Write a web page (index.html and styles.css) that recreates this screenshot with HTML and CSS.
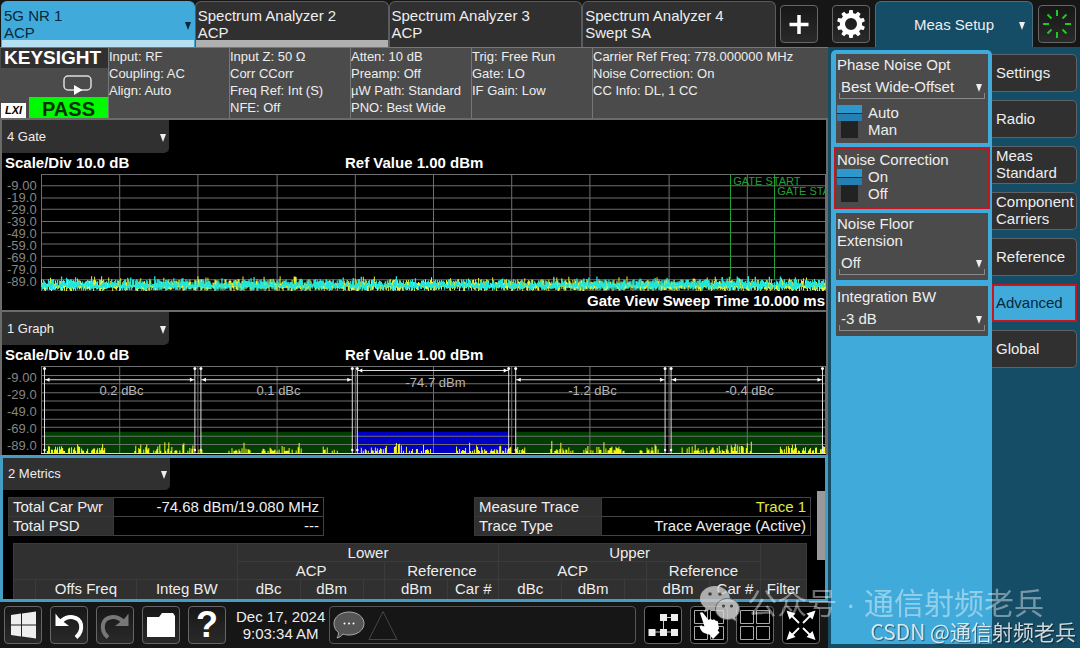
FILE: index.html
```html
<!DOCTYPE html>
<html lang="en">
<head>
    <meta charset="UTF-8">
    <title>Signal Analyzer</title>
    <link rel="stylesheet" href="styles.css">
</head>
<body>
    <main class="workspace">
        <div class="topbar">
            <nav class="tabs">
                <button class="tab active live">5G NR 1<br>ACP</button>
                <button class="tab live">Spectrum Analyzer 2<br>ACP</button>
                <button class="tab">Spectrum Analyzer 3<br>ACP</button>
                <button class="tab">Spectrum Analyzer 4<br>Swept SA</button>
            </nav>
            <button class="icon-btn add-btn" aria-label="Add screen">
                <svg width="36" height="36" viewBox="0 0 36 36"><path d="M18 9v19M8.500 18.500h19" stroke="#fff" stroke-width="3.500"/></svg>
            </button>
        </div>

        <section class="status">
            <div class="brand">
                <div class="brand-name">KEYSIGHT</div>
                <div class="sweep">
                    <svg width="30" height="22" viewBox="0 0 30 22"><rect x="1" y="1" width="27" height="14" rx="4" fill="none" stroke="#ddd" stroke-width="1.500"/><path d="M11 10l8.500 5-8.500 5z" fill="#fff"/></svg>
                </div>
                <div class="result">
                    <span class="lxi">LXI</span>
                    <span class="pass">PASS</span>
                </div>
            </div>
            <div class="cell">Input: RF<br>Coupling: AC<br>Align: Auto</div>
            <div class="cell">Input Z: 50 Ω<br>Corr CCorr<br>Freq Ref: Int (S)<br>NFE: Off</div>
            <div class="cell">Atten: 10 dB<br>Preamp: Off<br>µW Path: Standard<br>PNO: Best Wide</div>
            <div class="cell">Trig: Free Run<br>Gate: LO<br>IF Gain: Low</div>
            <div class="cell">Carrier Ref Freq: 778.000000 MHz<br>Noise Correction: On<br>CC Info: DL, 1 CC</div>
        </section>

        <section class="panel gate">
            <div class="view-select">
                <select aria-label="Window 4 view"><option>4 Gate</option></select>
            </div>
            <div class="scale"><span>Scale/Div 10.0 dB</span><span>Ref Value 1.00 dBm</span></div>
            <div class="chart">
                <div class="axis gate-axis">
                    <span>-9.00</span><span>-19.0</span><span>-29.0</span><span>-39.0</span><span>-49.0</span><span>-59.0</span><span>-69.0</span><span>-79.0</span><span>-89.0</span>
                </div>
                <div class="plot">
                    <svg id="gate-plot" viewBox="0 0 783 115" preserveAspectRatio="none"></svg>
                    <span class="marker marker-1">GATE START</span>
                    <span class="marker marker-2">GATE START</span>
                </div>
            </div>
            <div class="sweep-time">Gate View Sweep Time 10.000 ms</div>
        </section>

        <section class="panel graph">
            <div class="view-select">
                <select aria-label="Window 1 view"><option>1 Graph</option></select>
            </div>
            <div class="scale"><span>Scale/Div 10.0 dB</span><span>Ref Value 1.00 dBm</span></div>
            <div class="chart">
                <div class="axis graph-axis">
                    <span>-9.00</span><span>-29.0</span><span>-49.0</span><span>-69.0</span><span>-89.0</span>
                </div>
                <div class="plot">
                    <svg id="acp-plot" viewBox="0 0 783 87" preserveAspectRatio="none"></svg>
                    <div class="readings">
                        <span>0.2 dBc</span><span>0.1 dBc</span><span class="carrier">-74.7 dBm</span><span>-1.2 dBc</span><span>-0.4 dBc</span>
                    </div>
                </div>
            </div>
        </section>

        <section class="panel metrics">
            <div class="view-select">
                <select aria-label="Window 2 view"><option>2 Metrics</option></select>
            </div>
            <div class="summary">
                <table class="totals">
                    <tr><th>Total Car Pwr</th><td>-74.68 dBm/19.080 MHz</td></tr>
                    <tr><th>Total PSD</th><td>---</td></tr>
                </table>
                <table class="traces">
                    <tr><th>Measure Trace</th><td class="trace-1">Trace 1</td></tr>
                    <tr><th>Trace Type</th><td>Trace Average (Active)</td></tr>
                </table>
            </div>
            <table class="offsets">
                <colgroup>
                    <col class="w-gap"><col class="w-wide"><col class="w-wide">
                    <col class="w-val"><col class="w-val"><col class="w-gap"><col class="w-val"><col class="w-car">
                    <col class="w-val"><col class="w-val"><col class="w-gap"><col class="w-val"><col class="w-car">
                    <col class="w-filter">
                </colgroup>
                <tr><th colspan="3" rowspan="2"></th><th colspan="5">Lower</th><th colspan="5">Upper</th><th rowspan="2"></th></tr>
                <tr><th colspan="3">ACP</th><th colspan="2">Reference</th><th colspan="3">ACP</th><th colspan="2">Reference</th></tr>
                <tr>
                    <th></th><th>Offs Freq</th><th>Integ BW</th>
                    <th>dBc</th><th>dBm</th><th></th><th>dBm</th><th>Car #</th>
                    <th>dBc</th><th>dBm</th><th></th><th>dBm</th><th>Car #</th>
                    <th>Filter</th>
                </tr>
            </table>
            <div class="scrollbar"></div>
        </section>

        <footer class="taskbar">
            <button class="icon-btn" aria-label="Windows">
                <svg width="36" height="36" viewBox="0 0 36 36" fill="#eee"><path d="M6 8l10-1.500v11H6zM17 6.400L31 4.500v13H17zM6 18.500h10v11L6 28zM17 18.500h14v13l-14-1.900z"/></svg>
            </button>
            <button class="icon-btn" aria-label="Undo">
                <svg width="36" height="36" viewBox="0 0 36 36"><path d="M10 14.500C17 7.500 28 9 30 17.500c1 5.500-1.500 10-5 13" fill="none" stroke="#fff" stroke-width="4"/><path d="M4.500 6.500l3 4 4 3.500 6.500 5H4.500z" fill="#fff"/></svg>
            </button>
            <button class="icon-btn" aria-label="Redo">
                <svg width="36" height="36" viewBox="0 0 36 36"><path d="M26 14.500C19 7.500 8 9 6 17.500c-1 5.500 1.500 10 5 13" fill="none" stroke="#777" stroke-width="4"/><path d="M31.500 6.500l-3 4-4 3.500-6.500 5h13.500z" fill="#777"/></svg>
            </button>
            <button class="icon-btn" aria-label="Files">
                <svg width="36" height="36" viewBox="0 0 36 36"><path d="M4 10h12l3-4h11l2 3v21H4z" fill="#fff"/></svg>
            </button>
            <button class="icon-btn help" aria-label="Help">?</button>
            <time class="clock">Dec 17, 2024<br>9:03:34 AM</time>
            <div class="messages">
                <svg width="68" height="36" viewBox="0 0 68 36">
                    <path d="M19 5c8.500 0 15 5 15 11.500S27.500 28 19 28c-2.500 0-4-.3-6-1-1.500 2-3.500 3.500-6 4 1-1.500 1.500-3.500 1.500-5.500C5.500 23.500 4 20 4 16.500 4 10 10.500 5 19 5z" fill="#555" stroke="#aaa"/>
                    <g fill="#fff"><circle cx="14.500" cy="16.500" r="1"/><circle cx="19" cy="16.500" r="1"/><circle cx="23.500" cy="16.500" r="1"/></g>
                    <path d="M53 4.500L67 32.500H39z" fill="none" stroke="#444"/>
                </svg>
            </div>
            <button class="icon-btn black" aria-label="Block diagram">
                <svg width="36" height="36" viewBox="0 0 36 36"><path d="M18.500 10.500h11M18.500 10.500v15M7 25h23" stroke="#ccc" fill="none"/><path d="M15 7h7v7h-7zM26 7h7v7h-7zM3.500 22h7v7h-7zM15 22h7v7h-7zM26 22h7v7h-7z" fill="#eee"/></svg>
            </button>
            <button class="icon-btn black" aria-label="Touch layout">
                <svg width="36" height="36" viewBox="0 0 36 36"><path d="M3.500 3.500h13v13h-13zM19.500 3.500h13v13h-13zM3.500 19.500h13v13h-13zM19.500 19.500h13v13h-13z" fill="none" stroke="#aaa"/><path d="M9 6c1-1.200 2.500-.8 3.500.5l5 6.500c1.500-1.500 3-1 3.500 0 1.500-1 3-.5 3.500.8 1.500-.5 2.800.3 2.500 2l1 6-4.500 5-4 1.200-5-1.500c-3.500-1-5.500-4-6-7.500 1.500-1.200 3-.5 4.500 1l.5-.5z" fill="#fff"/><path d="M19 28.500l7-6 2.500 3-6.500 6.500z" fill="#fff"/></svg>
            </button>
            <button class="icon-btn black" aria-label="Multiple windows">
                <svg width="36" height="36" viewBox="0 0 36 36"><path d="M3.500 3.500h13v13h-13zM19.500 3.500h13v13h-13zM3.500 19.500h13v13h-13zM19.500 19.500h13v13h-13z" fill="none" stroke="#aaa"/></svg>
            </button>
            <button class="icon-btn black" aria-label="Full screen">
                <svg width="36" height="36" viewBox="0 0 36 36"><path d="M6 6l10 10M30 6L20 16M6 31l10-10M30 31L20 21" stroke="#fff" stroke-width="1.800"/><path d="M3.500 3.500l9 3-6 6zM32.500 3.500l-9 3 6 6zM3.500 33l9-3-6-6zM32.500 33l-9-3 6-6z" fill="#fff"/></svg>
            </button>
        </footer>
    </main>

    <aside class="side">
        <div class="side-top">
            <button class="icon-btn" aria-label="System settings">
                <svg width="36" height="36" viewBox="0 0 36 36">
                    <g fill="#fff">
                        <path id="teeth" d="M15.500 9l.8-5h3.400l.8 5zM15.500 27l.8 5h3.400l.8-5z"/>
                        <use href="#teeth" transform="rotate(36 18 18)"/>
                        <use href="#teeth" transform="rotate(72 18 18)"/>
                        <use href="#teeth" transform="rotate(108 18 18)"/>
                        <use href="#teeth" transform="rotate(144 18 18)"/>
                    </g>
                    <circle cx="18" cy="18" r="8.500" fill="none" stroke="#fff" stroke-width="5"/>
                </svg>
            </button>
            <button class="menu-title">Meas Setup</button>
            <button class="icon-btn" aria-label="Sweep activity">
                <svg width="36" height="36" viewBox="0 0 36 36"><path d="M18 4v6M18 26v6M4 18h6M26 18h6M8.500 8.500l4 4M23.500 23.500l4 4M8.500 27.500l4-4M23.500 12.500l4-4" stroke="#1fc91f" stroke-width="2"/></svg>
            </button>
        </div>
        <div class="side-body">
            <form class="settings">
                <div class="setting">
                    <label for="phase-noise">Phase Noise Opt</label>
                    <div class="dropdown"><select id="phase-noise"><option>Best Wide-Offset</option></select></div>
                    <div class="switch">
                        <label><input type="radio" name="phase-mode" checked>Auto</label>
                        <label><input type="radio" name="phase-mode">Man</label>
                    </div>
                </div>
                <div class="setting marked">
                    <span>Noise Correction</span>
                    <div class="switch">
                        <label><input type="radio" name="noise-corr" checked>On</label>
                        <label><input type="radio" name="noise-corr">Off</label>
                    </div>
                </div>
                <div class="setting">
                    <label for="floor-ext">Noise Floor<br>Extension</label>
                    <div class="dropdown"><select id="floor-ext"><option>Off</option></select></div>
                </div>
                <div class="setting">
                    <label for="int-bw">Integration BW</label>
                    <div class="dropdown"><select id="int-bw"><option>-3 dB</option></select></div>
                </div>
            </form>
            <nav class="pages">
                <button>Settings</button>
                <button>Radio</button>
                <button>Meas<br>Standard</button>
                <button>Component<br>Carriers</button>
                <button>Reference</button>
                <button class="current">Advanced</button>
                <button>Global</button>
            </nav>
        </div>
    </aside>

    <div class="wechat-mark">
        <svg width="42" height="38" viewBox="0 0 42 38">
            <path d="M16 1C7.500 1 1 6.500 1 13.500c0 4 2 7 5.500 9.500L5 27.500l5.500-2.700c1.800.5 3.500.7 5.500.7 7-1 15-5.500 15-12S24 1 16 1z" fill="#ccc"/>
            <path d="M28.500 13.500C22 13.500 16.500 18 16.500 24s5.500 10.500 12 10.500c1.500 0 3-.2 4.500-.7l4.500 2.400-1.200-4c2.800-2 4.200-5 4.200-8.200 0-6-5.500-10.500-12-10.500z" fill="#ddd" stroke="#777"/>
            <g fill="#444"><circle cx="11" cy="9" r="1.800"/><circle cx="21" cy="9" r="1.800"/><circle cx="24.500" cy="21" r="1.500"/><circle cx="32.500" cy="21" r="1.500"/></g>
        </svg>
        <span>公众号 · 通信射频老兵</span>
    </div>
    <div class="csdn-mark">CSDN @通信射频老兵</div>

    <script src="script.js"></script>
</body>
</html>
```
FILE: styles.css
```css
* {
    box-sizing: border-box;
}

body {
    display: grid;
    grid-template-columns: minmax(0, 1fr) 252px;
    min-height: 100vh;
    margin: 0;
    background: #161616;
    color: #eee;
    font-family: "Liberation Sans", Arial, sans-serif;
    font-size: 15px;
    line-height: 17px;
}

button,
select {
    margin: 0;
    font: inherit;
    color: inherit;
}

svg {
    display: block;
}

/* left part */
.workspace {
    display: flex;
    flex-direction: column;
    min-width: 0;
}

.topbar {
    display: flex;
    align-items: center;
    height: 47px;
}

.tabs {
    display: flex;
    flex: 1;
    align-self: stretch;
    padding: 1px 0 0 1px;
}

.tab {
    flex: 1;
    position: relative;
    padding: 4px 2px 5px;
    border: 1px solid #5c5c5c;
    border-bottom: none;
    border-radius: 6px 6px 0 0;
    background: #303030;
    text-align: left;
}

.tab.active {
    background: #40abdb;
    color: #06283a;
    border-color: #40abdb;
}

.tab.live::before {
    content: "";
    position: absolute;
    left: 0;
    right: 0;
    bottom: 0;
    height: 7px;
    background: rgba(255, 255, 255, 0.62);
}

.tab.active::after,
.menu-title::after,
.view-select::after,
.dropdown::after {
    content: "";
    position: absolute;
    right: 3px;
    top: 50%;
    margin-top: -3px;
    border: 3px solid transparent;
    border-top: 8px solid currentColor;
    border-bottom: none;
    pointer-events: none;
}

.icon-btn {
    flex: none;
    width: 38px;
    height: 38px;
    padding: 0;
    border: 1px solid #666;
    border-radius: 4px;
    background: linear-gradient(#171717, #2a2a2a);
}

.icon-btn.black {
    background: #000;
}

.add-btn {
    margin: 0 10px 0 4px;
}

.status {
    display: grid;
    grid-template-columns: 108px repeat(4, 121fr) 236fr;
    height: 73px;
    border-top: 1px solid #777;
    border-bottom: 2px solid #6b6b6b;
    background: #4b4b4b;
    font-size: 13px;
}

.cell {
    border-left: 1px solid #777;
    white-space: nowrap;
}

.brand {
    display: flex;
    flex-direction: column;
    padding-left: 1px;
}

.brand-name {
    height: 20px;
    padding-left: 3px;
    background: #303030;
    color: #fff;
    font-size: 19px;
    font-weight: bold;
    line-height: 20px;
}

.sweep {
    display: flex;
    flex: 1;
    justify-content: flex-end;
    align-items: flex-end;
    padding-right: 15px;
}

.result {
    display: flex;
    align-items: flex-end;
    gap: 3px;
}

.lxi {
    width: 25px;
    height: 15px;
    background: #fff;
    color: #000;
    font-size: 11px;
    font-style: italic;
    font-weight: bold;
    line-height: 15px;
    text-align: center;
}

.pass {
    flex: 1;
    height: 21px;
    background: #00fb00;
    color: #003000;
    font-size: 20px;
    font-weight: bold;
    line-height: 24px;
    text-align: center;
}

/* measurement windows */
.panel {
    position: relative;
    display: flex;
    flex-direction: column;
    border: 2px solid #6b6b6b;
    border-top: none;
    background: #000;
}

.gate {
    flex: 115 0 auto;
}

.graph {
    flex: 87 0 auto;
    border-bottom: none;
}

.view-select {
    position: relative;
    width: 167px;
    height: 33px;
    font-size: 13px;
}

.view-select select {
    appearance: none;
    width: 100%;
    height: 100%;
    padding: 0 5px;
    border: none;
    border-radius: 0 0 5px 0;
    background: #303030;
}

.scale {
    display: grid;
    grid-template-columns: 340fr 481fr;
    padding: 1px 0 3px 3px;
    color: #fff;
    font-weight: bold;
}

.chart {
    display: flex;
    flex: 1;
}

.axis {
    display: flex;
    flex-direction: column;
    width: 39px;
    padding-left: 5px;
    color: #858585;
    font-size: 13px;
    line-height: 11px;
}

.axis span {
    display: flex;
    flex: 1 0 0;
    align-items: center;
    height: 0;
}

.gate-axis {
    padding-top: 6px;
    padding-bottom: 4px;
}

.graph-axis {
    padding-top: 3px;
}

.plot {
    position: relative;
    flex: 1;
    min-width: 0;
    overflow: hidden;
}

.gate .plot {
    min-height: 116px;
}

.graph .plot {
    min-height: 87px;
}

.plot svg {
    position: absolute;
    inset: 0;
    width: 100%;
    height: 100%;
}

.marker {
    position: absolute;
    top: 0;
    bottom: 12px;
    padding-left: 2px;
    border-left: 1px solid #22a035;
    color: #22a035;
    font-size: 11px;
    line-height: 14px;
    white-space: nowrap;
}

.marker-1 {
    left: 87.8%;
}

.marker-2 {
    left: 93.4%;
    padding-top: 10px;
}

.sweep-time {
    height: 19px;
    padding-right: 1px;
    line-height: 19px;
    color: #fff;
    font-weight: bold;
    text-align: right;
}

.readings {
    position: relative;
    display: grid;
    grid-template-columns: repeat(5, 1fr);
    padding-top: 8px;
    color: #b5b5b5;
    font-size: 13px;
    text-align: center;
}

.readings span {
    padding: 8px 0 0 4px;
}

.readings .carrier {
    padding-top: 0;
}

.metrics {
    border: 3px solid #459dc4;
}

.metrics .view-select {
    height: 32px;
}

.summary {
    display: grid;
    grid-template-columns: 316fr 337fr;
    gap: 150px;
    padding: 7px 14px 7px 5px;
}

table {
    width: 100%;
    border-collapse: collapse;
    table-layout: fixed;
}

th,
td {
    height: 19px;
    padding: 0 4px;
    border: 1px solid #444;
    font-weight: normal;
    white-space: nowrap;
}

th {
    background: #303030;
}

.summary th {
    width: 105px;
    border-color: #383838;
    text-align: left;
}

.summary .traces th {
    width: 127px;
}

td {
    text-align: right;
}

td.trace-1 {
    color: #dfe84a;
}

.offsets {
    width: auto;
    margin: 0 18px 0 10px;
}

.offsets th {
    height: 18px;
    padding: 0;
    border-color: #3b3b3b;
}

.offsets tr:last-child th {
    height: 20px;
    padding-bottom: 2px;
    border-bottom: none;
}

.w-gap {
    width: 22px;
}

.w-wide {
    width: 101px;
}

.w-val {
    width: 63px;
}

.w-car {
    width: 51px;
}

.w-filter {
    width: 46px;
}

.scrollbar {
    position: absolute;
    top: 33px;
    right: 0;
    width: 8px;
    height: 69px;
    background: #999;
}

/* bottom bar */
.taskbar {
    display: flex;
    align-items: center;
    gap: 8px;
    height: 46px;
    padding: 0 8px 0 4px;
}

.help {
    color: #fff;
    font-size: 36px;
    font-weight: bold;
    line-height: 36px;
}

.clock {
    padding-left: 2px;
    text-align: center;
    white-space: nowrap;
}

.messages {
    flex: 1;
    height: 38px;
    margin-left: -4px;
    border: 1px solid #555;
    border-radius: 4px;
}

/* menu panel */
.side {
    display: flex;
    flex-direction: column;
    background: #154c66;
}

.side-top {
    display: flex;
    align-items: center;
    gap: 5px;
    height: 47px;
    padding: 0 4px;
    background: #161616;
}

.menu-title {
    position: relative;
    flex: 1;
    align-self: stretch;
    margin-top: 1px;
    border: 1px solid #4c6f80;
    border-bottom: none;
    border-radius: 6px 6px 0 0;
    background: #154c66;
}

.menu-title::after {
    right: 7px;
}

.side-body {
    display: flex;
    flex: 1;
    padding: 3px 3px 4px;
}

.settings {
    display: flex;
    flex: none;
    flex-direction: column;
    gap: 6px;
    width: 161px;
    padding: 4px 4px 4px 5px;
    border-radius: 5px 5px 0 0;
    background: #40abdb;
}

.setting {
    padding: 2px 1px 5px;
    background: #4b4b4b;
}

.setting > label,
.setting > span {
    display: block;
}

.setting.marked {
    outline: 2px solid #c4161c;
}

.dropdown {
    position: relative;
    height: 24px;
    margin: 2px 2px 0;
}

.dropdown::before {
    content: "";
    position: absolute;
    left: 0;
    right: 0;
    bottom: 0;
    height: 5px;
    border: 1px solid #888;
    border-top: none;
}

.dropdown select {
    appearance: none;
    width: 100%;
    height: 100%;
    padding: 0 2px 2px;
    border: none;
    background: none;
}

.dropdown option {
    background: #4b4b4b;
}

.switch label {
    display: flex;
    align-items: center;
    gap: 6px;
    height: 17px;
}

.dropdown + .switch {
    padding-top: 5px;
}

.switch input {
    appearance: none;
    width: 17px;
    height: 17px;
    margin: 0 4px;
    background: #222;
}

.switch input:checked {
    width: 25px;
    height: 16px;
    margin: 0;
    background: linear-gradient(#2e97cb 50%, #0c2c3c 50%, #0c2c3c 57%, #2380b0 57%);
}

.pages {
    display: flex;
    flex: 1;
    flex-direction: column;
    gap: 8px;
    min-width: 0;
    padding-top: 4px;
}

.pages button {
    height: 38px;
    padding: 0 0 2px 4px;
    border: 1px solid #5f6366;
    border-left: none;
    border-radius: 0 5px 5px 0;
    background: #303030;
    text-align: left;
}

.pages .current {
    border: 2px solid #c4161c;
    border-radius: 0;
    padding-left: 2px;
    background: #40abdb;
    color: #06283a;
}

/* overlay marks */
.wechat-mark,
.csdn-mark {
    position: fixed;
    white-space: nowrap;
    pointer-events: none;
}

.wechat-mark {
    display: flex;
    align-items: center;
    gap: 6px;
    right: 36px;
    bottom: 25px;
    color: rgba(255, 255, 255, 0.42);
    font-family: "Liberation Sans", "Noto Sans CJK SC", sans-serif;
    font-size: 30px;
    line-height: 38px;
}

.wechat-mark svg {
    opacity: 0.8;
}

.csdn-mark {
    right: 4px;
    bottom: 5px;
    color: rgba(255, 255, 255, 0.8);
    font-family: "Noto Sans CJK SC", sans-serif;
    font-size: 21px;
    line-height: 24px;
    text-shadow: 1px 1px 1px rgba(0, 0, 0, 0.5);
}
```
FILE: script.js
```js
var seed = 7;

function rand() {
    seed = (seed * 16807) % 2147483647;
    return seed / 2147483647;
}

// 10 x 10 graticule
function grid(w, h) {
    var d = '';
    for (var i = 0; i <= 10; i++) {
        var x = Math.round(i * (w - 1) / 10) + 0.5;
        var y = Math.round(i * (h - 1) / 10) + 0.5;
        d += 'M' + x + ' 0V' + h + 'M0 ' + y + 'H' + w;
    }
    return '<path d="' + d + '" fill="none" stroke="#6e6e6e"/>';
}

// one vertical stroke per column, so the band stays dense
function noise(w, top, bottom) {
    var d = '';
    for (var x = 0; x < w; x++) {
        var y1 = top + rand() * 5;
        var y2 = bottom - rand() * 5;
        if (rand() > 0.93) y1 = top - 3 + rand() * 3;
        if (rand() > 0.8) y1 = top + 6;
        d += 'M' + (x + 0.5) + ' ' + y1.toFixed(1) + 'V' + y2.toFixed(1);
    }
    return d;
}

// narrow peaks standing on the base line, in uneven groups
function spikes(w, base) {
    var d = '';
    for (var x = 1; x < w; x++) {
        var busy = Math.sin(x / 17) + Math.sin(x / 7.3) > -0.6;
        if (busy && rand() > 0.45) {
            var y = base - 2 - rand() * rand() * 10;
            d += 'M' + (x + 0.5) + ' ' + base + 'V' + y.toFixed(1);
        }
    }
    return d;
}

document.getElementById('gate-plot').innerHTML = grid(783, 115) +
    '<path d="' + noise(783, 103, 115) + '" fill="none" stroke="#e8f03a"/>' +
    '<path d="' + noise(783, 103, 114) + '" fill="none" stroke="#22e6dc" stroke-width="1.3"/>';

// offset / carrier bands: [left, right]
var bands = [[3, 153], [159, 310], [315, 466], [473, 622], [628, 779]];
var fills = '';
var limits = '';
bands.forEach(function (b, i) {
    var mid = i === 2;
    var y = mid ? 4.5 : 13.5;
    var l = b[0] + 0.5;
    var r = b[1] + 0.5;
    fills += '<rect x="' + b[0] + '" y="65" width="' + (b[1] - b[0]) + '" height="22" fill="' + (mid ? '#0000c4' : '#003f00') + '"/>';
    limits += '<path d="M' + l + ' 2V86M' + r + ' 2V86M' + l + ' ' + y + 'H' + r + '" stroke="#ddd" fill="none"/>';
    [l, r].forEach(function (x) {
        limits += '<circle cx="' + x + '" cy="2.5" r="1.5" fill="#fff"/><circle cx="' + x + '" cy="83" r="1.2" fill="#fff"/>';
    });
    limits += '<path d="M' + (l + 1) + ' ' + y + 'l4 -2v4zM' + (r - 1) + ' ' + y + 'l-4 -2v4z" fill="#fff"/>';
});

document.getElementById('acp-plot').innerHTML = fills + grid(783, 87) + limits +
    '<path d="M0 86.5H783" stroke="#ddd"/>' +
    '<path d="' + spikes(783, 86) + '" fill="none" stroke="#f4f41c"/>';
```
